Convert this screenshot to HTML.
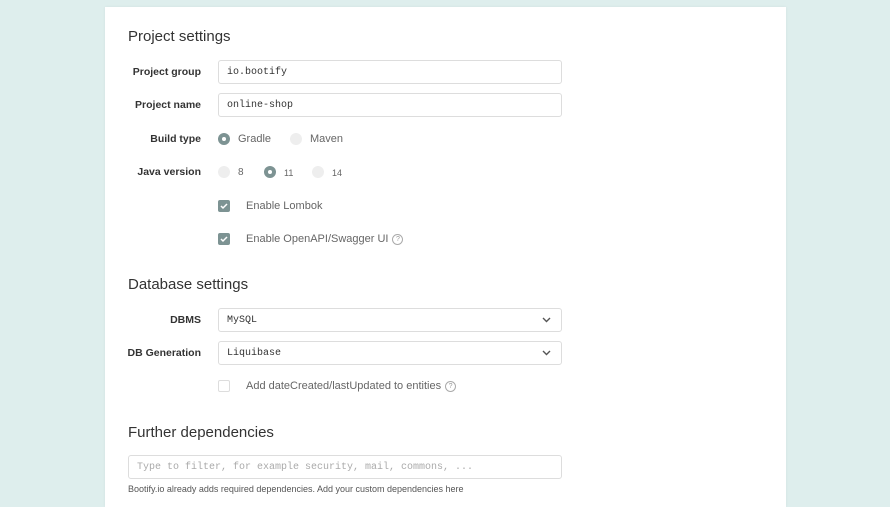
<!DOCTYPE html>
<html><head><style>
body{margin:0;width:890px;height:500px;background:#deeeed;font-family:"Liberation Sans",sans-serif;overflow:hidden;position:relative}
.card{position:absolute;left:105px;top:7px;width:681px;height:500px;background:#fff;box-shadow:0 0 3px rgba(0,0,0,.06)}
h2{position:absolute;left:128px;margin:0;font-weight:normal;font-size:15px;color:#333}
.lbl{position:absolute;right:689px;font-size:10.5px;font-weight:bold;color:#333}
.inp{position:absolute;left:218px;width:344px;height:24px;border:1px solid #ddd;border-radius:3px;background:#fff;font-family:"Liberation Mono",monospace;font-size:10px;color:#333;line-height:23px;padding-left:8px;box-sizing:border-box}
.r{position:absolute;width:12px;height:12px;border-radius:50%;background:#eee}
.r.on{background:#7d9393}
.r.on:after{content:"";position:absolute;left:4px;top:4px;width:4px;height:4px;border-radius:50%;background:#fff}
.t{position:absolute;font-size:11px;color:#666}
.cb{position:absolute;left:218px;width:12px;height:12px;border-radius:2px;background:#7d9393}
.cb svg{position:absolute;left:2px;top:2px}
.q{display:inline-block;width:9px;height:9px;border:1px solid #aaa;border-radius:50%;font-size:7px;line-height:9px;text-align:center;color:#999;margin-left:4px;vertical-align:1px}
.chev{position:absolute;right:10px;top:8px}
</style></head><body>
<div class="card"></div>
<h2 style="top:28px">Project settings</h2>
<div class="lbl" style="top:66px">Project group</div>
<div class="inp" style="top:60px">io.bootify</div>
<div class="lbl" style="top:99px">Project name</div>
<div class="inp" style="top:93px">online-shop</div>
<div class="lbl" style="top:133px">Build type</div>
<div class="r on" style="left:218px;top:133px"></div><div class="t" style="left:238px;top:133px">Gradle</div>
<div class="r" style="left:290px;top:133px"></div><div class="t" style="left:310px;top:133px">Maven</div>
<div class="lbl" style="top:166px">Java version</div>
<div class="r" style="left:218px;top:166px"></div><div class="t" style="left:238px;top:167px;font-size:10px">8</div>
<div class="r on" style="left:264px;top:166px"></div><div class="t" style="left:284px;top:168px;font-size:9px">11</div>
<div class="r" style="left:312px;top:166px"></div><div class="t" style="left:332px;top:168px;font-size:9px">14</div>
<div class="cb" style="top:200px"><svg width="8" height="8" viewBox="0 0 8 8"><path d="M1 4l2 2 4-4" stroke="#fff" stroke-width="1.5" fill="none"/></svg></div>
<div class="t" style="left:246px;top:200px">Enable Lombok</div>
<div class="cb" style="top:233px"><svg width="8" height="8" viewBox="0 0 8 8"><path d="M1 4l2 2 4-4" stroke="#fff" stroke-width="1.5" fill="none"/></svg></div>
<div class="t" style="left:246px;top:233px">Enable OpenAPI/Swagger UI<span class="q">?</span></div>
<h2 style="top:276px">Database settings</h2>
<div class="lbl" style="top:314px">DBMS</div>
<div class="inp" style="top:308px">MySQL<svg class="chev" width="9" height="6" viewBox="0 0 9 6"><path d="M1 1l3.5 3.5L8 1" stroke="#555" stroke-width="1.4" fill="none"/></svg></div>
<div class="lbl" style="top:347px">DB Generation</div>
<div class="inp" style="top:341px">Liquibase<svg class="chev" width="9" height="6" viewBox="0 0 9 6"><path d="M1 1l3.5 3.5L8 1" stroke="#555" stroke-width="1.4" fill="none"/></svg></div>
<div class="cb" style="top:380px;background:#fff;border:1px solid #ddd;box-sizing:border-box"></div>
<div class="t" style="left:246px;top:380px">Add dateCreated/lastUpdated to entities<span class="q">?</span></div>
<h2 style="top:424px">Further dependencies</h2>
<div class="inp" style="left:128px;width:434px;top:455px;color:#aaa">Type to filter, for example security, mail, commons, ...</div>
<div class="t" style="left:128px;top:484px;font-size:9px;color:#555">Bootify.io already adds required dependencies. Add your custom dependencies here</div>
</body></html>
